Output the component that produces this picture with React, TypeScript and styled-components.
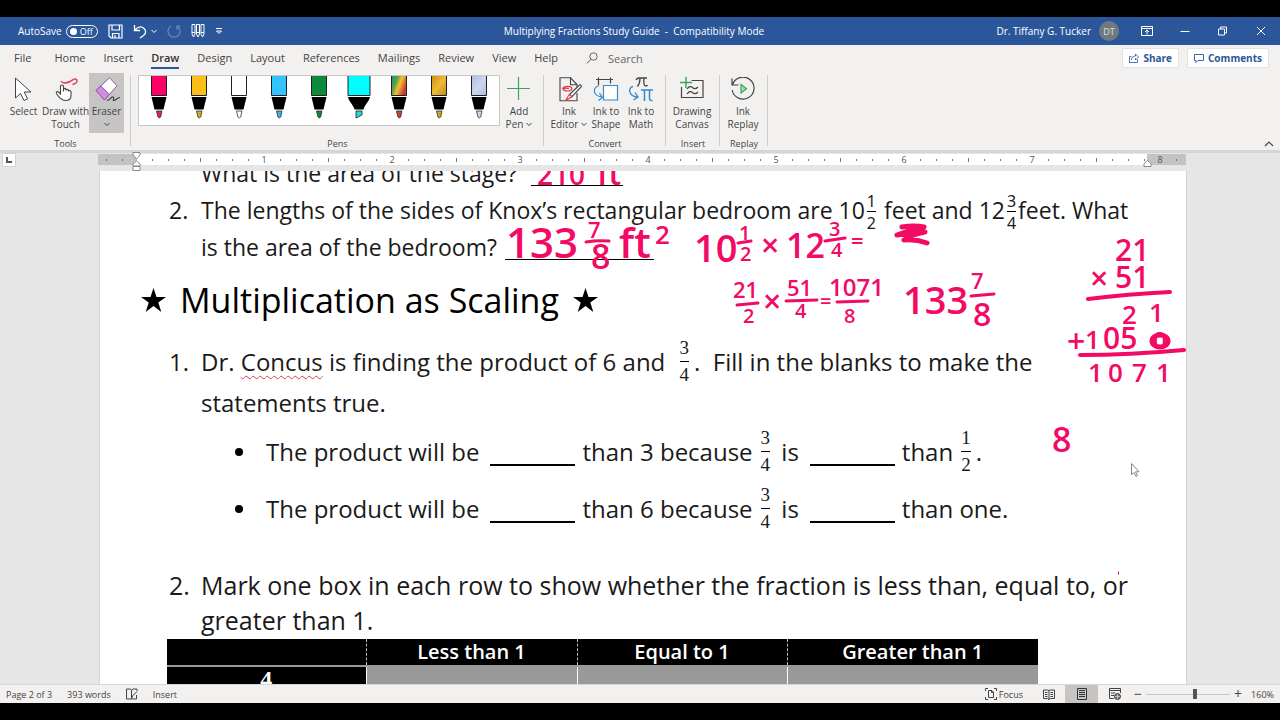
import React from "react";
import styled, { createGlobalStyle, css } from "styled-components";

const UI = `"Open Sans", "Noto Sans", sans-serif`;
const BLUE = "#2b579a";
const INK = "#f20a64";

const Global = createGlobalStyle`
  * { box-sizing: border-box; }
  body { margin: 0; background: #000; font-family: ${UI}; }
  button { font: inherit; color: inherit; background: none; border: 0; padding: 0; margin: 0; cursor: default; }
  svg { display: block; flex: none; }
`;

const Frame = styled.div`
  display: flex;
  flex-direction: column;
  height: 100vh;
  padding: 17px 0;
  background: #000;
  color: #444;
  overflow: hidden;
`;

/* ---------- title bar ---------- */
const TitleBar = styled.header`
  flex: none;
  display: grid;
  grid-template-columns: 1fr auto 1fr;
  align-items: center;
  height: 28px;
  padding-left: 18px;
  background: ${BLUE};
  color: #fff;
  font-size: 10px;
`;
const QuickAccess = styled.div`
  display: flex;
  align-items: center;
  gap: 10px;
`;
const AutoSave = styled.label`
  display: flex;
  align-items: center;
  gap: 4px;
`;
const Toggle = styled.button`
  display: flex;
  align-items: center;
  justify-content: space-between;
  width: 32px;
  height: 13px;
  padding: 0 4px 0 3px;
  border: 1px solid #fff;
  border-radius: 7px;
  font-size: 9px;
  line-height: 11px;
  &::before {
    content: "";
    width: 7px;
    height: 7px;
    border-radius: 50%;
    background: #fff;
  }
`;
const IconButton = styled.button<{ $dim?: boolean }>`
  display: flex;
  align-items: center;
  gap: 4px;
  opacity: ${(p) => (p.$dim ? 0.3 : 1)};
`;
const DocTitle = styled.h1`
  margin: 0;
  padding-right: 30px;
  font-size: 10px;
  font-weight: 400;
  white-space: pre;
`;
const Account = styled.div`
  display: flex;
  align-items: center;
  justify-content: flex-end;
`;
const Avatar = styled.span`
  display: grid;
  place-items: center;
  width: 20px;
  height: 20px;
  margin: 0 9px 0 8px;
  border-radius: 50%;
  background: #6f7a80;
  font-size: 9px;
  color: #dde0e2;
`;
const WindowButton = styled.button`
  display: grid;
  place-items: center;
  width: 38px;
  height: 28px;
`;

/* ---------- tabs ---------- */
const TabBar = styled.nav`
  flex: none;
  display: flex;
  align-items: center;
  height: 28px;
  padding: 0 11px 2px 14px;
  background: #f2f1f0;
  font-size: 11px;
`;
const Tabs = styled.div`
  display: flex;
  gap: 18px;
`;
const Tab = styled.button<{ $active?: boolean }>`
  height: 22px;
  line-height: 22px;
  border-bottom: 2px solid transparent;
  &:first-child { margin-right: 5px; }
  ${(p) =>
    p.$active &&
    css`
      font-weight: 600;
      color: #333;
      border-color: ${BLUE};
    `}
`;
const SearchBox = styled.label`
  display: flex;
  align-items: center;
  gap: 10px;
  flex: 1;
  padding-left: 28px;
`;
const SearchInput = styled.input`
  width: 120px;
  height: 18px;
  padding: 0;
  border: 0;
  background: none;
  font: 11px ${UI};
  &::placeholder { color: #666; opacity: 1; }
`;
const TabActions = styled.div`
  display: flex;
  gap: 8px;
`;
const ActionButton = styled.button`
  display: flex;
  align-items: center;
  gap: 4px;
  height: 20px;
  padding: 0 6px;
  border: 1px solid #e4e2e0;
  border-radius: 2px;
  background: #fff;
  color: ${BLUE};
  font-size: 10px;
  font-weight: 700;
`;

/* ---------- ribbon ---------- */
const Ribbon = styled.div`
  flex: none;
  display: flex;
  height: 77px;
  background: #f2f1f0;
  font-size: 10px;
`;
const Group = styled.section<{ $w: number }>`
  position: relative;
  display: flex;
  flex-direction: column;
  flex: none;
  width: ${(p) => p.$w}px;
  &::after {
    content: "";
    position: absolute;
    right: 0;
    top: 2px;
    bottom: 4px;
    width: 1px;
    background: #cfcdcb;
  }
`;
const GroupBody = styled.div<{ $start?: number }>`
  display: flex;
  flex: 1;
  padding-left: ${(p) => p.$start ?? 0}px;
`;
const GroupLabel = styled.h2`
  margin: 0;
  font-size: 9px;
  font-weight: 400;
  line-height: 13px;
  text-align: center;
`;
const Tool = styled.button<{ $w: number; $active?: boolean }>`
  display: flex;
  flex-direction: column;
  align-items: center;
  flex: none;
  width: ${(p) => p.$w}px;
  height: 60px;
  padding-top: 4px;
  line-height: 13px;
  white-space: nowrap;
  background: ${(p) => (p.$active ? "#c6c5c4" : "none")};
  & > svg { margin-bottom: 2px; }
`;
const WithArrow = styled.span`
  display: flex;
  align-items: center;
  justify-content: center;
  gap: 3px;
  min-height: 13px;
`;
const Gallery = styled.div`
  display: flex;
  height: 51px;
  margin: 2px 1px 0 7px;
  border: 1px solid #c8c6c4;
  background: #fff;
`;
const PenButton = styled.button`
  display: flex;
  justify-content: center;
  width: 40px;
`;
const Collapse = styled.button`
  align-self: flex-end;
  margin: 0 6px 0 auto;
  height: 12px;
`;

/* ---------- ruler ---------- */
const RulerRow = styled.div`
  flex: none;
  display: flex;
  justify-content: center;
  position: relative;
  height: 21px;
  padding: 4px 0 0 4px;
  border-top: 3px solid #d6d5d4;
  background: #e6e6e6;
`;
const TabStop = styled.button`
  position: absolute;
  left: 2px;
  top: 0;
  display: grid;
  place-items: center;
  width: 14px;
  height: 14px;
  border: 1px solid #d4d4d4;
  background: #fff;
`;
const Ruler = styled.div`
  position: relative;
  display: flex;
  flex: none;
  width: 1088px;
  height: 11px;
  margin-top: -3px;
`;
const RulerPart = styled.div<{ $w?: number; $pad: number; $margin?: boolean }>`
  display: flex;
  align-items: center;
  overflow: hidden;
  flex: ${(p) => (p.$w ? "none" : "1")};
  width: ${(p) => (p.$w ? `${p.$w}px` : "auto")};
  padding-left: ${(p) => p.$pad}px;
  background: ${(p) => (p.$margin ? "#c3c3c3" : "#fff")};
`;
const Tick = styled.span<{ $half?: boolean }>`
  flex: none;
  display: grid;
  place-items: center;
  width: 16px;
  font-size: 9px;
  line-height: 11px;
  color: #555;
  &:empty::before {
    content: "";
    width: 1px;
    height: ${(p) => (p.$half ? 4 : 2)}px;
    background: #777;
  }
`;
const Marker = styled.svg<{ $x: number }>`
  position: absolute;
  left: ${(p) => p.$x}px;
  top: -2px;
`;

/* ---------- document ---------- */
const Workspace = styled.main`
  display: flex;
  justify-content: center;
  flex: 1;
  min-height: 0;
  padding-left: 6px;
  background: #e6e6e6;
  overflow: hidden;
`;
const Page = styled.article`
  position: relative;
  flex: none;
  width: 1088px;
  min-height: 100%;
  border: solid #d2d2d2;
  border-width: 0 1px;
  background: #fff;
  color: #1a1a1a;
  font-family: "Open Sans", sans-serif;
  overflow: hidden;
`;
const Scrolled = styled.div`
  margin-top: -16px;
`;
const Block = styled.section<{ $gap: number; $size?: number }>`
  padding-top: ${(p) => p.$gap}px;
  font-size: ${(p) => p.$size ?? 24}px;
`;
const Line = styled.div<{ $h: number; $indent?: number }>`
  display: flex;
  align-items: center;
  height: ${(p) => p.$h}px;
  line-height: ${(p) => p.$h}px;
  padding-left: ${(p) => p.$indent ?? 101}px;
  white-space: pre;
`;
const Num = styled.span`
  width: 32px;
`;
const BulletMark = styled.span`
  width: 8px;
  height: 8px;
  margin-right: 23px;
  border-radius: 50%;
  background: #000;
`;
const Heading = styled.h2`
  display: flex;
  align-items: center;
  gap: 14px;
  height: 52px;
  margin: 0;
  padding: 0 0 0 41px;
  color: #000;
  font-size: 34px;
  font-weight: 400;
  line-height: 52px;
`;
const Blank = styled.span<{ $w: number; $thin?: boolean }>`
  width: ${(p) => p.$w}px;
  height: ${(p) => (p.$thin ? 25 : 29)}px;
  margin: 0 7px 0 ${(p) => (p.$thin ? 8 : 11)}px;
  border-bottom: ${(p) => (p.$thin ? 1 : 2)}px solid #000;
`;
const Misspelt = styled.span`
  text-decoration: underline wavy #d04050 1px;
  text-underline-offset: 4px;
`;
const FracBox = styled.span<{ $small?: boolean }>`
  display: inline-flex;
  flex-direction: column;
  align-items: center;
  margin: ${(p) => (p.$small ? "4px 2px 0" : "2px 5px 0 8px")};
  font-family: ${(p) => (p.$small ? `"Noto Sans", sans-serif` : `"Liberation Serif", serif`)};
  font-size: ${(p) => (p.$small ? 16 : 19)}px;
  font-weight: 400;
  line-height: ${(p) => (p.$small ? 22 : 26)}px;
  & > span:first-child {
    line-height: 20px;
    padding-bottom: ${(p) => (p.$small ? 0 : 3)}px;
    border-bottom: 1px solid #000;
  }
`;
const Frac = ({ n, d, small }: { n: string; d: string; small?: boolean }) => (
  <FracBox $small={small}>
    <span>{n}</span>
    <span>{d}</span>
  </FracBox>
);

const Grid = styled.table`
  width: 871px;
  margin: 1px 0 0 67px;
  border-collapse: collapse;
  table-layout: fixed;
  font-size: 20px;
  font-weight: 600;
  color: #fff;
  th {
    height: 27px;
    padding: 0;
    line-height: 24px;
    font-weight: 600;
    background: #000;
    border-right: 1px dashed #bbb;
    border-bottom: 2px solid #999;
  }
  tbody th { height: 60px; vertical-align: top; font-family: "Liberation Serif", serif; font-size: 24px; font-weight: 700; border-right: 1px solid #fff; }
  td { background: #999; border-right: 1px solid #fff; border-top: 1px solid #fff; }
  tr > :last-child { border-right: 0; }
`;

const InkLayer = styled.svg`
  position: absolute;
  left: 0;
  top: 0;
  font-family: "Open Sans", sans-serif;
  font-weight: 600;
`;

/* ---------- status bar ---------- */
const StatusBar = styled.footer`
  flex: none;
  display: flex;
  align-items: center;
  height: 19px;
  padding: 0 6px;
  border-top: 1px solid #d8d8d8;
  background: #f2f1f0;
  font-size: 9px;
`;
const StatusLeft = styled.div`
  display: flex;
  align-items: center;
  gap: 15px;
  flex: 1;
`;
const StatusButton = styled.button`
  display: flex;
  align-items: center;
  gap: 2px;
  height: 18px;
`;
const FocusButton = styled(StatusButton)`
  margin-right: 9px;
`;
const ViewButton = styled.button<{ $on?: boolean }>`
  display: grid;
  place-items: center;
  width: 33px;
  height: 18px;
  background: ${(p) => (p.$on ? "#c6c5c4" : "none")};
`;
const ZoomButton = styled.button`
  width: 14px;
  font-size: 14px;
  line-height: 16px;
`;
const Zoom = styled.input`
  appearance: none;
  width: 84px;
  height: 10px;
  margin: 0 1px;
  background: linear-gradient(#c8c8c8, #c8c8c8) center / 100% 1px no-repeat;
  &::-webkit-slider-thumb {
    appearance: none;
    width: 4px;
    height: 10px;
    background: #555;
  }
`;
const Percent = styled.span`
  width: 29px;
  text-align: right;
`;

/* ---------- icons ---------- */
const Chevron = ({ c = "#444" }: { c?: string }) => (
  <svg width="6" height="5" viewBox="0 0 6 5" fill="none" stroke={c}>
    <path d="M.5 1 3 3.5 5.500 1" />
  </svg>
);

type PenSpec = { name: string; body: string; tip: string; wide?: boolean };
const pens: PenSpec[] = [
  { name: "Pink pen", body: "#ff0066", tip: "#e0225f" },
  { name: "Gold pen", body: "#fcbf17", tip: "#e0a91c" },
  { name: "White pen", body: "#ffffff", tip: "#ffffff" },
  { name: "Blue pen", body: "#33c4ff", tip: "#33b4ea" },
  { name: "Green pen", body: "#0b8a3c", tip: "#0b8a3c" },
  { name: "Aqua highlighter", body: "#00fdff", tip: "#1fd9e0", wide: true },
  { name: "Rainbow pen", body: "url(#rainbow)", tip: "#c2492f" },
  { name: "Gold glitter pen", body: "url(#gold)", tip: "#d3a51e" },
  { name: "Silver glitter pen", body: "url(#silver)", tip: "#cfd3ec" },
];
const Pen = ({ body, tip, wide }: PenSpec) =>
  wide ? (
    <svg width="26" height="44" viewBox="0 0 26 44">
      <path d="M2 0v19.500h22V0" fill={body} stroke="#222" />
      <path d="M2 21h22c-1 5-5 7-6.500 12.500h-9C7 28 3 26 2 21z" fill="#000" />
      <path d="M10 35h6v4l-6 3z" fill={tip} stroke="#222" strokeWidth=".8" />
    </svg>
  ) : (
    <svg width="18" height="44" viewBox="0 0 18 44">
      <path d="M1.500 0v19.500h15V0" fill={body} stroke="#222" />
      <path d="M1.500 21h15L13.500 33.500h-9z" fill="#000" />
      <path d="M6.500 35h5.500l-1.300 6q-1.400 1.800-2.800 0z" fill={tip} stroke="#333" strokeWidth=".8" />
    </svg>
  );

const SelectIcon = () => (
  <svg width="26" height="26" viewBox="0 0 26 26" fill="#fff" stroke="#444" strokeLinejoin="miter">
    <path d="M4.500 1v20l5-4.500 3.500 7 3.500-1.700-3.300-6.800h6.800z" />
  </svg>
);
const TouchIcon = () => (
  <svg width="26" height="26" viewBox="0 0 26 26" fill="none" stroke="#444" strokeWidth="1.100">
    <path d="M8 4c2 3.500 6 2 9 .5s5-4 6.500-2 0 4-4 5" stroke="#e0384c" strokeWidth="1.400" />
    <path d="M7.500 17V9.500c0-2 3-2 3 0v5-2c0-1.500 2.500-1.500 2.500 0v1c0-1.500 2.500-1.500 2.500 0v1c0-1.400 2.500-1.400 2.500 0v4c0 3-2 5-5.500 5-4 0-6-2-9-7-.8-1.500 1-2.500 2-1.500z" fill="#fff" />
  </svg>
);
const EraserIcon = () => (
  <svg width="26" height="26" viewBox="0 0 26 26" fill="none" stroke="#444">
    <path d="M2 13.500 15.500.8l7.500 8L10.500 23z" fill="#fff" stroke="#9b4fae" />
    <path d="m2 13.500 4.800-4.600 8.500 8.700L10.500 23z" fill="#cf8fdc" stroke="#9b4fae" />
    <path d="M13 23.500c4-1 4-4 6-3.500s-1 4 1 3.500 3-3 6-3" strokeWidth="1.200" />
  </svg>
);
const AddIcon = () => (
  <svg width="26" height="26" viewBox="0 0 26 26" stroke="#3ba55d" strokeWidth="1.200">
    <path d="M12.500 0v23M1 11.500h23" />
  </svg>
);
const InkEditorIcon = () => (
  <svg width="26" height="26" viewBox="0 0 26 26" fill="none" stroke="#444" strokeWidth="1.100">
    <path d="M14.500.8H4v23h17V16M14.500.8v7H21V7.500zL21 7.500V10" />
    <path d="M6.500 12c1-3.500 10-3.500 9.500-.3s-8 3-9 .3q2.500-1.500 6-.5" stroke="#e0384c" />
    <path d="m13.500 17.500 10-9.500q2-.5 1.800 1.700l-9.500 10z" fill="#fff" />
    <path d="m9.500 23.500 3.800-6 2.500 2.300z" stroke="#e0384c" fill="#fff" />
  </svg>
);
const InkShapeIcon = () => (
  <svg width="26" height="26" viewBox="0 0 26 26" fill="none" strokeWidth="1.200">
    <path d="M3 2.500h17M5.500.5v8M17.500.5v6" stroke="#444" />
    <path d="M10.500 8.500h14v14.500h-14z" stroke="#2f8ad0" fill="#fff" />
    <path d="M5.500 9c-6 1-6 10 3.500 11M5.500 23.500l4-3.200L6.500 16" stroke="#2f8ad0" />
  </svg>
);
const InkMathIcon = () => (
  <svg width="26" height="26" viewBox="0 0 26 26" fill="none" strokeWidth="1.300">
    <path d="M8 3q1-2 3-2h8M12 1c0 4-.5 6-2.500 8.500M16 1c-.5 4-.5 8 2 8q1 0 1.500-1" stroke="#444" />
    <path d="M13 13h12M16.500 13v11M21.500 13v8.500q0 2.500 3 2" stroke="#2f8ad0" strokeWidth="1.500" />
    <path d="M5 9.500c-5 1-5 9 4 10.500M5.500 23 10 20l-3-4.500" stroke="#2f8ad0" />
  </svg>
);
const CanvasIcon = () => (
  <svg width="26" height="26" viewBox="0 0 26 26" fill="none" stroke="#444" strokeWidth="1.200">
    <path d="M12.500 3.500h11.500v17H2.500V10" />
    <path d="M7 0v11M1 5.500h12" stroke="#3ba55d" strokeWidth="1.400" />
    <path d="M8 12q3-4 5.500-1.500T19 10M8 17q3-4 5.500-1.500T19 15" />
  </svg>
);
const ReplayIcon = () => (
  <svg width="26" height="26" viewBox="0 0 26 26" fill="none" stroke="#444" strokeWidth="1.200">
    <path d="M2.500 8a11 11 0 1 1-.3 5M2 1.500V8h6.500" />
    <path d="M11 7.500v8.500l5.500-4.300z" fill="#a5e0b8" stroke="#3ba55d" />
  </svg>
);

/* A plain tick run between two ruler positions, in eighths of an inch. */
const ticks = (from: number, to: number) =>
  Array.from({ length: to - from + 1 }, (_, i) => from + i).map((k) => (
    <Tick key={k} $half={k % 8 === 4}>
      {k > 0 && k % 8 === 0 ? k / 8 : null}
    </Tick>
  ));

const Star = () => (
  <svg width="25" height="25" viewBox="0 0 25 25">
    <path d="m12.500 0 3 9H25l-7.700 5.500 3 9.500-7.800-5.900L4.700 24l3-9.500L0 9h9.500z" />
  </svg>
);

/* Handwritten notes: [text, x, baseline, size] in window units of the page. */
const notes: [string, number, number, number][] = [
  ["210", 537, 185, 28],
  ["ft", 597, 185, 32],
  ["133", 506, 258, 42],
  ["7", 588, 238, 22],
  ["8", 591, 269, 34],
  ["ft", 619, 258, 42],
  ["2", 655, 244, 26],
  ["10", 694, 262, 38],
  ["1", 739, 240, 20],
  ["2", 740, 261, 20],
  ["×", 761, 257, 32],
  ["12", 786, 258, 34],
  ["3", 829, 236, 20],
  ["4", 831, 257, 20],
  ["=", 851, 249, 22],
  ["21", 733, 298, 22],
  ["2", 743, 323, 20],
  ["×", 763, 313, 32],
  ["51", 787, 296, 22],
  ["4", 795, 318, 20],
  ["=", 820, 308, 20],
  ["1071", 829, 296, 24],
  ["8", 844, 323, 20],
  ["133", 903, 314, 38],
  ["7", 971, 289, 22],
  ["8", 973, 326, 32],
  ["21", 1115, 261, 30],
  ["×", 1090, 290, 32],
  ["51", 1115, 288, 30],
  ["2", 1122, 324, 26],
  ["1", 1149, 322, 26],
  ["+", 1067, 353, 32],
  ["1", 1085, 349, 26],
  ["05", 1103, 349, 30],
  ["0", 1153, 349, 24],
  ["1", 1088, 382, 26],
  ["0", 1108, 382, 26],
  ["7", 1132, 382, 26],
  ["1", 1156, 382, 26],
  ["8", 1052, 452, 34],
];

export default function App() {
  return (
    <Frame>
      <Global />
      <TitleBar>
        <QuickAccess>
          <AutoSave>
            AutoSave
            <Toggle role="switch" aria-checked="false">Off</Toggle>
          </AutoSave>
          <IconButton aria-label="Save">
            <svg width="15" height="15" viewBox="0 0 15 15" fill="none" stroke="#fff" strokeWidth="1.200">
              <path d="M1 1h13v13H3l-2-2zM4 1v5h7.500V1M4.500 14V9.500h6.500V14M7 11v3" />
            </svg>
          </IconButton>
          <IconButton aria-label="Undo">
            <svg width="14" height="15" viewBox="0 0 14 15" fill="none" stroke="#fff" strokeWidth="1.300">
              <path d="M1.500 1v5.500H7M1.500 6.500c3-4 7-4.500 9.500-2s2 5-.5 7L7 14" />
            </svg>
            <Chevron c="#fff" />
          </IconButton>
          <IconButton aria-label="Redo" $dim>
            <svg width="14" height="14" viewBox="0 0 14 14" fill="none" stroke="#fff" strokeWidth="1.200">
              <path d="M4 2a6 6 0 1 0 6 0M10 6V2h3.500" />
            </svg>
          </IconButton>
          <IconButton aria-label="Pens">
            <svg width="14" height="14" viewBox="0 0 14 14" fill="none" stroke="#fff">
              <path d="M1 .5h3v9.500l-1.500 3L1 10zM5.500.5h3v9.500l-1.500 3-1.500-3zM10 .5h3v9.500l-1.500 3-1.500-3zM1 8.500h3M5.500 8.500h3M10 8.500h3" />
            </svg>
          </IconButton>
          <IconButton aria-label="Customize Quick Access Toolbar">
            <svg width="8" height="7" viewBox="0 0 8 7" fill="none" stroke="#fff">
              <path d="M1 .5h6M1.500 3h5L4 5.500z" />
            </svg>
          </IconButton>
        </QuickAccess>
        <DocTitle>{"Multiplying Fractions Study Guide  -  Compatibility Mode"}</DocTitle>
        <Account>
          Dr. Tiffany G. Tucker
          <Avatar>DT</Avatar>
          <WindowButton aria-label="Ribbon display options">
            <svg width="12" height="10" viewBox="0 0 12 10" fill="none" stroke="#fff">
              <path d="M.5.500h11v9H.5zM.5 2.500h11M6 8.500V4.500M4 6l2-2 2 2" />
            </svg>
          </WindowButton>
          <WindowButton aria-label="Minimize">
            <svg width="10" height="10" viewBox="0 0 10 10" stroke="#fff"><path d="M.5 5.500h9" /></svg>
          </WindowButton>
          <WindowButton aria-label="Restore">
            <svg width="10" height="10" viewBox="0 0 10 10" fill="none" stroke="#fff">
              <path d="M.5 3h6v6h-6zM2.500 3V1h6v6h-2" />
            </svg>
          </WindowButton>
          <WindowButton aria-label="Close">
            <svg width="10" height="10" viewBox="0 0 10 10" stroke="#fff"><path d="m1 1 8 8M9 1 1 9" /></svg>
          </WindowButton>
        </Account>
      </TitleBar>

      <TabBar>
        <Tabs>
          {["File", "Home", "Insert", "Draw", "Design", "Layout", "References", "Mailings", "Review", "View", "Help"].map((t) => (
            <Tab key={t} $active={t === "Draw"}>{t}</Tab>
          ))}
        </Tabs>
        <SearchBox>
          <svg width="12" height="12" viewBox="0 0 12 12" fill="none" stroke="#666">
            <circle cx="7.500" cy="4.500" r="3.700" /><path d="M5 7.300.7 11.500" />
          </svg>
          <SearchInput placeholder="Search" aria-label="Search" />
        </SearchBox>
        <TabActions>
          <ActionButton>
            <svg width="10" height="10" viewBox="0 0 10 10" fill="none" stroke={BLUE}>
              <path d="M2.500 3.500h-2v6h8v-3M2.500 7c0-3 2-4 4-4V1l3 3-3 3V5" strokeWidth=".8" />
            </svg>
            Share
          </ActionButton>
          <ActionButton>
            <svg width="10" height="10" viewBox="0 0 10 10" fill="none" stroke={BLUE}>
              <path d="M.5 1.500h9v6H4L2 9.500v-2H.5z" strokeWidth=".9" />
            </svg>
            Comments
          </ActionButton>
        </TabActions>
      </TabBar>

      <Ribbon>
        <Group $w={131}>
          <GroupBody $start={5}>
            <Tool $w={37}><SelectIcon />Select</Tool>
            <Tool $w={47}><TouchIcon /><span>Draw with<br />Touch</span></Tool>
            <Tool $w={35} $active>
              <EraserIcon />Eraser
              <WithArrow><Chevron /></WithArrow>
            </Tool>
          </GroupBody>
          <GroupLabel>Tools</GroupLabel>
        </Group>
        <Group $w={413}>
          <GroupBody>
            <Gallery>
              {pens.map((p) => (
                <PenButton key={p.name} aria-label={p.name}><Pen {...p} /></PenButton>
              ))}
            </Gallery>
            <Tool $w={36}><AddIcon />Add<WithArrow>Pen<Chevron /></WithArrow></Tool>
          </GroupBody>
          <GroupLabel>Pens</GroupLabel>
        </Group>
        <Group $w={122}>
          <GroupBody $start={6}>
            <Tool $w={38}><InkEditorIcon />Ink<WithArrow>Editor<Chevron /></WithArrow></Tool>
            <Tool $w={36}><InkShapeIcon /><span>Ink to<br />Shape</span></Tool>
            <Tool $w={34}><InkMathIcon /><span>Ink to<br />Math</span></Tool>
          </GroupBody>
          <GroupLabel>Convert</GroupLabel>
        </Group>
        <Group $w={54}>
          <GroupBody $start={6}>
            <Tool $w={40}><CanvasIcon /><span>Drawing<br />Canvas</span></Tool>
          </GroupBody>
          <GroupLabel>Insert</GroupLabel>
        </Group>
        <Group $w={48}>
          <GroupBody $start={4}>
            <Tool $w={38}><ReplayIcon /><span>Ink<br />Replay</span></Tool>
          </GroupBody>
          <GroupLabel>Replay</GroupLabel>
        </Group>
        <Collapse aria-label="Collapse the ribbon">
          <svg width="10" height="6" viewBox="0 0 10 6" fill="none" stroke="#444" strokeWidth="1.200"><path d="M1 5l4-4 4 4" /></svg>
        </Collapse>
      </Ribbon>

      <RulerRow>
        <TabStop aria-label="Tab stop">
          <svg width="6" height="6" viewBox="0 0 6 6" stroke="#555" strokeWidth="2" fill="none"><path d="M1 0v5h5" /></svg>
        </TabStop>
        <Ruler>
          <RulerPart $w={39} $pad={0} $margin>{ticks(-2, -1)}</RulerPart>
          <RulerPart $pad={7}>{ticks(1, 63)}</RulerPart>
          <RulerPart $w={39} $pad={5} $margin>{ticks(64, 65)}</RulerPart>
          <Marker $x={34} width="9" height="19" viewBox="0 0 9 19" fill="#fff" stroke="#888">
            <path d="M1 .5h7V3L4.500 7 1 3zM4.500 9 8 12v2H1v-2zM1 14.500h7v4H1z" />
          </Marker>
          <Marker $x={1045} width="9" height="19" viewBox="0 0 9 19" fill="#fff" stroke="#888">
            <path d="M4.500 8.500 8 11.500v3H1v-3z" />
          </Marker>
        </Ruler>
      </RulerRow>

      <Workspace>
        <Page>
          <Scrolled>
            <Block $gap={0} $size={23}>
              <Line $h={37}>What is the area of the stage? <Blank $w={92} $thin /></Line>
              <Line $h={37} $indent={69}>
                <Num>2.</Num>The lengths of the sides of Knox’s rectangular bedroom are 10
                <Frac n="1" d="2" small /> feet and 12<Frac n="3" d="4" small />feet. What
              </Line>
              <Line $h={37}>is the area of the bedroom?<Blank $w={149} $thin /></Line>
            </Block>
            <Block $gap={8}>
              <Heading><Star />Multiplication as Scaling<Star /></Heading>
            </Block>
            <Block $gap={15}>
              <Line $h={41} $indent={69}>
                <Num>1.</Num>Dr. <Misspelt>Concus</Misspelt> is finding the product of 6 and <Frac n="3" d="4" />.  Fill in the blanks to make the
              </Line>
              <Line $h={41}>statements true.</Line>
              <Line $h={57} $indent={135}>
                <BulletMark />The product will be<Blank $w={85} />than 3 because<Frac n="3" d="4" /> is<Blank $w={85} />than<Frac n="1" d="2" />.
              </Line>
              <Line $h={57} $indent={135}>
                <BulletMark />The product will be<Blank $w={85} />than 6 because<Frac n="3" d="4" /> is<Blank $w={85} />than one.
              </Line>
            </Block>
            <Block $gap={31} $size={25}>
              <Line $h={35} $indent={69}>
                <Num>2.</Num>Mark one box in each row to show whether the fraction is less than, equal to, or
              </Line>
              <Line $h={35}>greater than 1.</Line>
            </Block>
            <Grid>
              <colgroup>
                <col width="199" /><col width="211" /><col width="210" /><col />
              </colgroup>
              <thead>
                <tr><th /><th>Less than 1</th><th>Equal to 1</th><th>Greater than 1</th></tr>
              </thead>
              <tbody>
                <tr><th>4</th><td /><td /><td /></tr>
              </tbody>
            </Grid>
          </Scrolled>

          <InkLayer width="1086" height="513" viewBox="100 171 1086 513">
            <defs>
              <linearGradient id="rainbow" x1="0" y1="0" x2="1" y2=".5">
                <stop offset="0" stopColor="#1c8f86" /><stop offset=".35" stopColor="#5aa04a" />
                <stop offset=".6" stopColor="#f2c230" /><stop offset="1" stopColor="#c8382e" />
              </linearGradient>
              <linearGradient id="gold" x1="0" y1="0" x2="1" y2="1">
                <stop offset="0" stopColor="#c98f17" /><stop offset=".5" stopColor="#f0bb35" /><stop offset="1" stopColor="#c08a14" />
              </linearGradient>
              <linearGradient id="silver" x1="0" y1="0" x2="1" y2="1">
                <stop offset="0" stopColor="#aebbe0" /><stop offset=".5" stopColor="#ccd6ef" /><stop offset="1" stopColor="#b0bcd8" />
              </linearGradient>
            </defs>
            <g fill={INK}>
              {notes.map(([t, x, y, size]) => (
                <text key={`${x}-${y}`} x={x} y={y} fontSize={size}>{t}</text>
              ))}
            </g>
            <g fill="none" stroke={INK} strokeLinecap="round" strokeLinejoin="round" strokeWidth="3">
              <path d="M586 242q12-2 23-1M738 243l13-2M825 241l20-3M737 305l21-2M786 301l31-1M837 302l31-1M971 296l23-2" />
              <path d="M1088 299q40-5 82-7M1080 355q50 0 104-5" strokeWidth="4" />
              <path d="M902 227q12-2 22 0-14 3-27 8 14-3 28-3-12 2-21 8 12-1 23 3" strokeWidth="5" />
              <ellipse cx="1160" cy="341" rx="8" ry="6" strokeWidth="5" />
              <path d="M1118.500 572v2" stroke="#c0104a" strokeWidth="1" />
            </g>
            <path d="M1131.500 463.500v11l2.500-2 2 4 1.500-.8-2-3.900h3.500z" fill="#fff" stroke="#777" strokeWidth=".9" />
          </InkLayer>
        </Page>
      </Workspace>

      <StatusBar>
        <StatusLeft>
          <StatusButton>Page 2 of 3</StatusButton>
          <StatusButton>393 words</StatusButton>
          <StatusButton aria-label="Proofing">
            <svg width="12" height="12" viewBox="0 0 12 12" fill="none" stroke="#444">
              <path d="M5.500 2v9H.5V1h3.500l1.500 1L7 1h4v2M5.500 11l1-3L11 3.500M6 11h4.500V7" />
            </svg>
          </StatusButton>
          <StatusButton>Insert</StatusButton>
        </StatusLeft>
        <FocusButton>
          <svg width="12" height="12" viewBox="0 0 12 12" fill="none" stroke="#444">
            <path d="M3 .5H.5V3M9 .5h2.500V3M3 11.500H.5V9M9 11.500h2.500V9M3.500 2.500H7l1.500 2v5h-5zM6.500 2.500v2h2" />
          </svg>
          Focus
        </FocusButton>
        <ViewButton aria-label="Read mode">
          <svg width="12" height="11" viewBox="0 0 12 11" fill="none" stroke="#444">
            <path d="M6 1.500v9M.5 1h4L6 1.500 7.500 1h4v8.500h-4L6 10.500l-1.500-1h-4zM2 3.500h2.500M2 5.500h2.500M2 7.500h2.500M7.500 3.500H10M7.500 5.500H10M7.500 7.500H10" />
          </svg>
        </ViewButton>
        <ViewButton aria-label="Print layout" $on>
          <svg width="10" height="12" viewBox="0 0 10 12" fill="none" stroke="#333">
            <path d="M.5.500h9v11h-9zM2 2.500h6M2 4.500h6M2 6.500h6M2 8.500h6" />
          </svg>
        </ViewButton>
        <ViewButton aria-label="Web layout">
          <svg width="12" height="12" viewBox="0 0 12 12" fill="none" stroke="#444">
            <path d="M11.500 5V.5H.5v10H5M.5 2.500h11M2 5h4M2 7.500h3" />
            <circle cx="8.500" cy="8.500" r="3" fill="#777" /><path d="M6 8.500h5M8.500 6v5" stroke="#ddd" strokeWidth=".6" />
          </svg>
        </ViewButton>
        <ZoomButton aria-label="Zoom out">−</ZoomButton>
        <Zoom type="range" min="0" max="100" defaultValue="59" aria-label="Zoom" />
        <ZoomButton aria-label="Zoom in">+</ZoomButton>
        <Percent>160%</Percent>
      </StatusBar>
    </Frame>
  );
}
